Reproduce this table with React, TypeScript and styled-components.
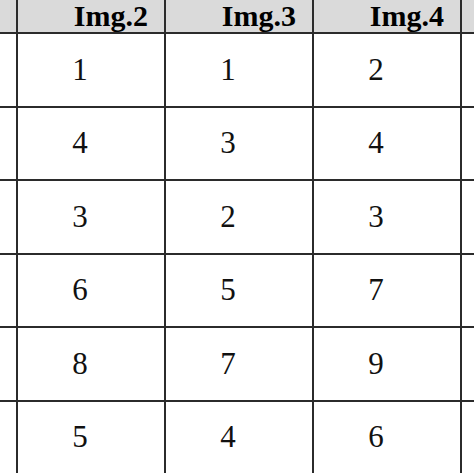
import { Fragment } from "react";
import styled, { createGlobalStyle } from "styled-components";

const GlobalStyle = createGlobalStyle`
  html, body {
    margin: 0;
    padding: 0;
    background: #ffffff;
  }
`;

const Viewport = styled.div`
  width: 474px;
  height: 474px;
  overflow: hidden;
  background: #ffffff;
`;

const Grid = styled.div`
  display: grid;
  grid-template-columns: 16px 146px 146px 146px 40px;
  grid-template-rows: 32px repeat(6, 71.5px);
  gap: 2px;
  background: #2b2b2b;
  width: max-content;
`;

const HeadCell = styled.div`
  background: #dadada;
  font-family: "Liberation Serif", "Times New Roman", serif;
  font-weight: bold;
  font-size: 30px;
  line-height: 32px;
  color: #000;
  text-align: right;
  padding-right: 16px;
  overflow: hidden;
  white-space: nowrap;
`;

const Cell = styled.div<{ $empty?: boolean }>`
  background: #ffffff;
  display: flex;
  align-items: center;
  justify-content: center;
  padding-right: ${(p) => (p.$empty ? 0 : 22)}px;
  font-family: "Liberation Serif", "Times New Roman", serif;
  font-size: 31px;
  color: #111;
`;

const headers = ["Img.2", "Img.3", "Img.4"];
const rows = [
  [1, 1, 2],
  [4, 3, 4],
  [3, 2, 3],
  [6, 5, 7],
  [8, 7, 9],
  [5, 4, 6],
];

export default function App() {
  return (
    <Viewport>
      <GlobalStyle />
      <Grid>
        <HeadCell />
        {headers.map((h) => (
          <HeadCell key={h}>{h}</HeadCell>
        ))}
        <HeadCell />
        {rows.map((r, i) => (
          <Fragment key={i}>
            <Cell $empty />
            {r.map((v, j) => (
              <Cell key={j}>{v}</Cell>
            ))}
            <Cell $empty />
          </Fragment>
        ))}
      </Grid>
    </Viewport>
  );
}
